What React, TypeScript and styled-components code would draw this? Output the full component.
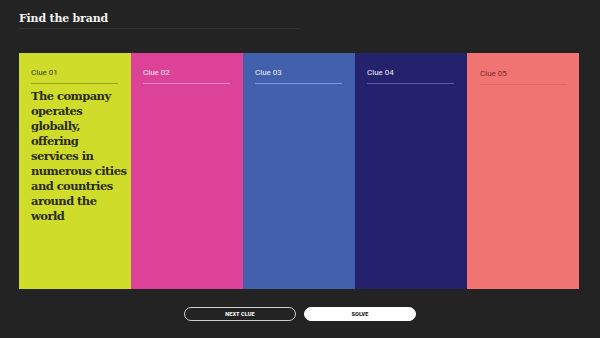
import React from "react";
import styled, { createGlobalStyle } from "styled-components";

const Global = createGlobalStyle`
  html, body { margin: 0; padding: 0; background: #232323; }
  body { width: 600px; height: 338px; overflow: hidden; }
`;

const Page = styled.div`
  width: 600px;
  height: 338px;
  box-sizing: border-box;
  padding: 12px 21px 0 19px;
  display: flex;
  flex-direction: column;
`;

const Header = styled.div`
  width: 281px;
  padding-bottom: 3px;
  border-bottom: 1.5px solid #333333;
`;

const Title = styled.h1`
  margin: 0;
  font-family: "DejaVu Serif", serif;
  font-weight: bold;
  font-size: 11px;
  line-height: 13px;
  color: #f2f2f2;
  letter-spacing: -0.2px;
`;

const Board = styled.div`
  margin-top: 24px;
  height: 236px;
  display: grid;
  grid-template-columns: repeat(5, minmax(0, 1fr));
`;

const Card = styled.div<{ $bg: string; $pad: number }>`
  background: ${(p) => p.$bg};
  padding: ${(p) => p.$pad + 3}px 0 0 ${(p) => p.$pad}px;
  display: flex;
  flex-direction: column;
  min-width: 0;
`;

const Label = styled.div<{ $color: string; $line: string }>`
  font-family: Roboto, "Liberation Sans", sans-serif;
  font-size: 8px;
  line-height: 10px;
  color: ${(p) => p.$color};
  width: 87px;
  padding-bottom: 5px;
  border-bottom: 1px solid ${(p) => p.$line};
`;

const ClueText = styled.p`
  margin: 5px 0 0;
  width: 96px;
  font-family: "DejaVu Serif", serif;
  font-weight: bold;
  font-size: 11.5px;
  line-height: 15px;
  color: #2b2b1c;
  letter-spacing: -0.55px;
`;

const Actions = styled.div`
  display: flex;
  justify-content: center;
  gap: 8px;
  margin-top: 18px;
  padding-left: 2px;
`;

const Button = styled.button<{ $solid?: boolean }>`
  width: 112px;
  height: 14px;
  border-radius: 7px;
  box-sizing: border-box;
  border: 1px solid ${(p) => (p.$solid ? "#ffffff" : "#cfcfcf")};
  background: ${(p) => (p.$solid ? "#ffffff" : "transparent")};
  color: ${(p) => (p.$solid ? "#222222" : "#f0f0f0")};
  font-family: Roboto, "Liberation Sans", sans-serif;
  font-weight: 900;
  font-size: 5.5px;
  letter-spacing: 0.1px;
  padding: 0;
  display: flex;
  align-items: center;
  justify-content: center;
`;

const clues = [
  { bg: "#cfdc2a", color: "#3a3a20", line: "#98a41c", pad: 12, text: "The company operates globally, offering services in numerous cities and countries around the world" },
  { bg: "#dc4398", color: "#fbe3f0", line: "#f08fc6", pad: 12 },
  { bg: "#4360ad", color: "#e6ebf7", line: "#7f98dc", pad: 12 },
  { bg: "#24226d", color: "#e8e8f5", line: "#5a5aa8", pad: 12 },
  { bg: "#f07572", color: "#7a2a2a", line: "#e06663", pad: 13 },
];

export default function App() {
  return (
    <>
      <Global />
      <Page>
        <Header>
          <Title>Find the brand</Title>
        </Header>
        <Board>
          {clues.map((c, i) => (
            <Card key={i} $bg={c.bg} $pad={c.pad}>
              <Label $color={c.color} $line={c.line}>
                Clue 0{i + 1}
              </Label>
              {c.text && <ClueText>{c.text}</ClueText>}
            </Card>
          ))}
        </Board>
        <Actions>
          <Button>NEXT CLUE</Button>
          <Button $solid>SOLVE</Button>
        </Actions>
      </Page>
    </>
  );
}
